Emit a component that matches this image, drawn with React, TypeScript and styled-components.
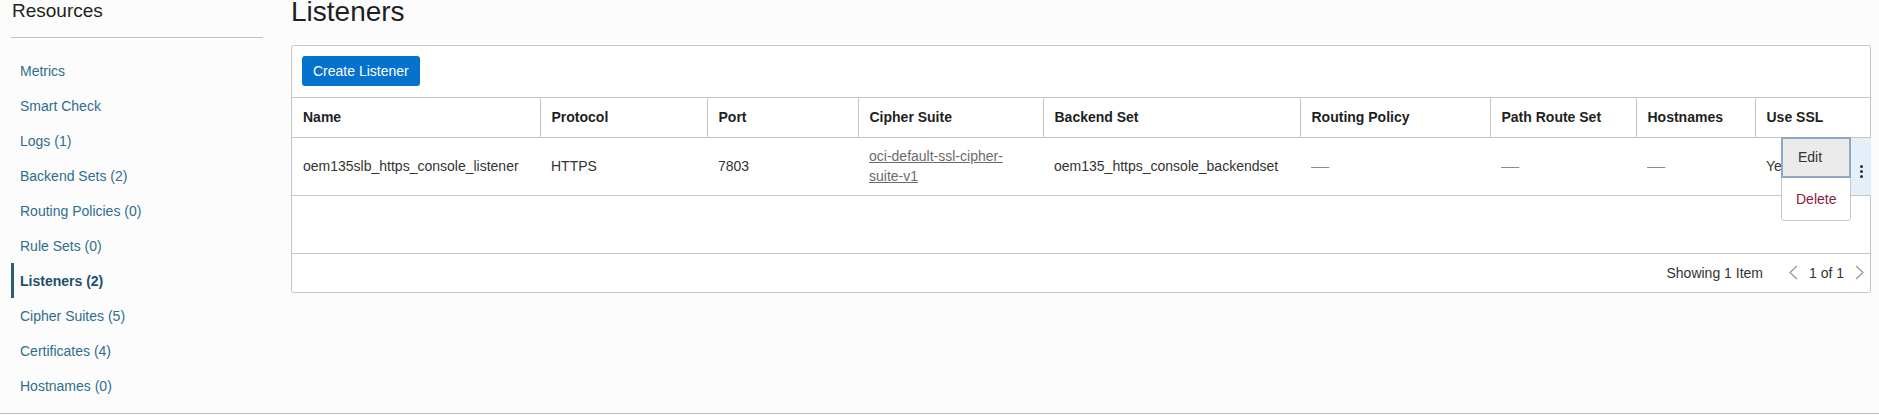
import React from "react";
import styled, { createGlobalStyle, css } from "styled-components";

const GlobalStyle = createGlobalStyle`
  html, body { margin: 0; padding: 0; background: #fcfcfc; }
  body { font-family: "Liberation Sans", Arial, sans-serif; color: #333; }
  * { box-sizing: border-box; }
`;

const Page = styled.div`
  display: flex;
  height: 414px;
  border-bottom: 1px solid #bdbdbd;
  overflow: hidden;
`;

const Sidebar = styled.nav`
  width: 252px;
  margin-left: 11px;
  flex-shrink: 0;
`;

const SidebarTitle = styled.h2`
  margin: 0;
  height: 38px;
  padding: 1px 0 0 1px;
  font-size: 19px;
  line-height: 20px;
  font-weight: normal;
  color: #1f1f1f;
  border-bottom: 1px solid #c3c3c3;
`;

const NavList = styled.ul`
  list-style: none;
  margin: 0;
  padding: 15px 0 0;
`;

const NavItem = styled.li<{ $active?: boolean }>`
  height: 35px;
  display: flex;
  align-items: center;
  padding-left: 6px;
  font-size: 14px;
  color: #2f6e8c;
  border-left: 3px solid transparent;
  ${(p) =>
    p.$active &&
    css`
      font-weight: bold;
      color: #1d4f6c;
      border-left-color: #2a5b78;
    `}
`;

const Main = styled.main`
  flex: 1;
  margin-left: 28px;
  margin-right: 8px;
  min-width: 0;
`;

const PageTitle = styled.h1`
  margin: 0 0 22px;
  font-size: 28px;
  line-height: 23px;
  padding-top: 0;
  font-weight: normal;
  color: #1f1f1f;
`;

const Panel = styled.section`
  background: #fff;
  border: 1px solid #c6c6c6;
  border-radius: 3px;
`;

const Toolbar = styled.div`
  padding: 10px 10px 11px;
  border-bottom: 1px solid #c6c6c6;
`;

const PrimaryButton = styled.button`
  height: 30px;
  padding: 0 11px;
  border: none;
  border-radius: 3px;
  background: #0572ce;
  color: #fff;
  font-family: inherit;
  font-size: 14px;
  display: block;
`;

const Table = styled.table`
  width: 100%;
  border-collapse: collapse;
  table-layout: fixed;
  font-size: 14px;
`;

const Th = styled.th<{ $noDivider?: boolean }>`
  height: 39px;
  padding: 0 11px;
  text-align: left;
  font-weight: bold;
  color: #1f1f1f;
  border-bottom: 1px solid #c6c6c6;
  border-left: ${(p) => (p.$noDivider ? "none" : "1px solid #c6c6c6")};
  white-space: nowrap;
`;

const Td = styled.td`
  height: 58px;
  padding: 0 11px;
  color: #333;
  vertical-align: middle;
  border-bottom: 1px solid #c6c6c6;
  white-space: nowrap;
  overflow: visible;
`;

const WrapTd = styled(Td)`
  white-space: normal;
  line-height: 20px;
`;

const EmptyTd = styled.td`
  height: 58px;
  border-bottom: 1px solid #c6c6c6;
`;

const Dash = styled.span`
  color: #8a8a8a;
  display: inline-block;
  transform: scaleX(1.3);
  transform-origin: left center;
`;

const CipherLink = styled.a`
  color: #6b6b6b;
  text-decoration: underline;
  display: inline-block;
  max-width: 150px;
`;

const ActionsTd = styled.td`
  position: relative;
  padding: 0;
  background: #e4eff9;
  border-bottom: 1px solid #c6c6c6;
  text-align: center;
  vertical-align: middle;
`;

const Kebab = styled.span`
  display: inline-flex;
  flex-direction: column;
  gap: 2px;
  align-items: center;
  & > i {
    width: 3px;
    height: 3px;
    border-radius: 50%;
    background: #2b2b2b;
    display: block;
  }
`;

const Menu = styled.ul`
  position: absolute;
  top: -1px;
  right: 100%;
  width: 70px;
  margin: 0;
  padding: 0;
  list-style: none;
  background: #fff;
  border: 1px solid #c6c6c6;
  border-radius: 0 0 3px 3px;
  z-index: 2;
  text-align: left;
`;

const MenuItem = styled.li<{ $focused?: boolean; $danger?: boolean }>`
  height: ${(p) => (p.$focused ? "41px" : "42px")};
  display: flex;
  align-items: center;
  padding-left: 14px;
  font-size: 14px;
  color: ${(p) => (p.$danger ? "#8b1c40" : "#333")};
  ${(p) =>
    p.$focused &&
    css`
      margin: -1px -1px 0;
      padding-left: 15px;
      background: #ebebeb;
      border: 2px solid #8ea7c4;
    `}
`;

const FooterBar = styled.div`
  height: 38px;
  display: flex;
  align-items: center;
  justify-content: flex-end;
  padding-right: 6px;
  font-size: 14px;
  color: #333;
`;

const Count = styled.span`
  margin-right: 26px;
`;

const Pager = styled.div`
  display: flex;
  align-items: center;
  gap: 11px;
`;

const Chevron = ({ dir }: { dir: "left" | "right" }) => (
  <svg width="9" height="15" viewBox="0 0 9 15" fill="none">
    <polyline
      points={dir === "left" ? "8,1 1,7.5 8,14" : "1,1 8,7.5 1,14"}
      stroke="#9a9a9a"
      strokeWidth="1.3"
    />
  </svg>
);

const navItems = [
  "Metrics",
  "Smart Check",
  "Logs (1)",
  "Backend Sets (2)",
  "Routing Policies (0)",
  "Rule Sets (0)",
  "Listeners (2)",
  "Cipher Suites (5)",
  "Certificates (4)",
  "Hostnames (0)",
];

const columns = [
  { title: "Name", width: 248 },
  { title: "Protocol", width: 167 },
  { title: "Port", width: 151 },
  { title: "Cipher Suite", width: 185 },
  { title: "Backend Set", width: 257 },
  { title: "Routing Policy", width: 190 },
  { title: "Path Route Set", width: 146 },
  { title: "Hostnames", width: 119 },
  { title: "Use SSL", width: 96 },
  { title: "", width: 20 },
];

export default function App() {
  return (
    <>
      <GlobalStyle />
      <Page>
        <Sidebar>
          <SidebarTitle>Resources</SidebarTitle>
          <NavList>
            {navItems.map((n) => (
              <NavItem key={n} $active={n === "Listeners (2)"}>
                {n}
              </NavItem>
            ))}
          </NavList>
        </Sidebar>
        <Main>
          <PageTitle>Listeners</PageTitle>
          <Panel>
            <Toolbar>
              <PrimaryButton>Create Listener</PrimaryButton>
            </Toolbar>
            <Table>
              <colgroup>
                {columns.map((c, i) => (
                  <col key={i} style={{ width: c.width }} />
                ))}
              </colgroup>
              <thead>
                <tr>
                  {columns.map((c, i) => (
                    <Th key={i} $noDivider={i === 0 || i === columns.length - 1}>
                      {c.title}
                    </Th>
                  ))}
                </tr>
              </thead>
              <tbody>
                <tr>
                  <Td>oem135slb_https_console_listener</Td>
                  <Td>HTTPS</Td>
                  <Td>7803</Td>
                  <WrapTd>
                    <CipherLink>oci-default-ssl-cipher-suite-v1</CipherLink>
                  </WrapTd>
                  <Td>oem135_https_console_backendset</Td>
                  <Td>
                    <Dash>—</Dash>
                  </Td>
                  <Td>
                    <Dash>—</Dash>
                  </Td>
                  <Td>
                    <Dash>—</Dash>
                  </Td>
                  <Td>Yes</Td>
                  <ActionsTd>
                    <Kebab>
                      <i />
                      <i />
                      <i />
                    </Kebab>
                    <Menu>
                      <MenuItem $focused>Edit</MenuItem>
                      <MenuItem $danger>Delete</MenuItem>
                    </Menu>
                  </ActionsTd>
                </tr>
                <tr>
                  <EmptyTd colSpan={10} />
                </tr>
              </tbody>
            </Table>
            <FooterBar>
              <Count>Showing 1 Item</Count>
              <Pager>
                <Chevron dir="left" />
                <span>1 of 1</span>
                <Chevron dir="right" />
              </Pager>
            </FooterBar>
          </Panel>
        </Main>
      </Page>
    </>
  );
}
